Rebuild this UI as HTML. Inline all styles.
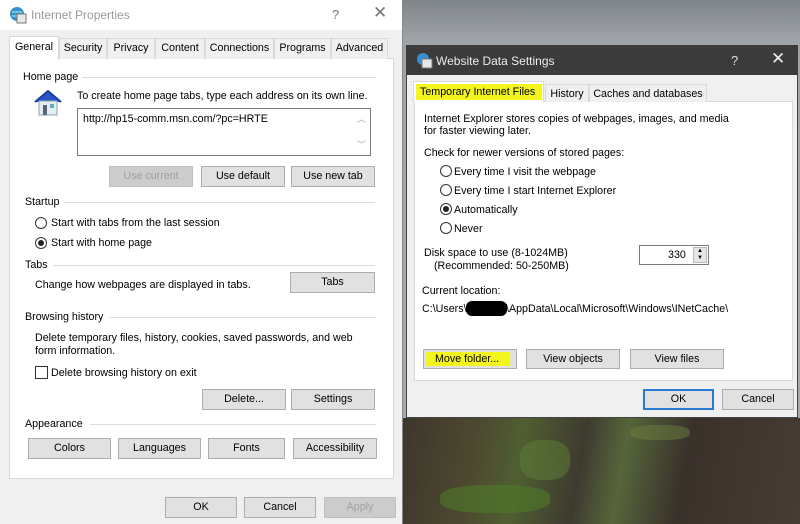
<!DOCTYPE html>
<html><head><style>
*{margin:0;padding:0;box-sizing:border-box}
body{width:800px;height:524px;overflow:hidden;position:relative;font-family:"Liberation Sans",sans-serif;font-size:10.7px;color:#000;background:#3a3430}
.a{position:absolute;white-space:nowrap}
.btn{position:absolute;background:#e1e1e1;border:1px solid #adadad;text-align:center;line-height:18px;font-size:10.7px}
.dis{color:#a0a0a0;background:#ccc;border-color:#bfbfbf}
.ln{position:absolute;height:1px;background:#dcdcdc}
.rad{position:absolute;width:12px;height:12px;border:1px solid #333;border-radius:50%;background:#fff}
.rad.on::after{content:"";position:absolute;left:2px;top:2px;width:6px;height:6px;border-radius:50%;background:#222}
.tab{position:absolute;border:1px solid #d9d9d9;border-bottom:none;background:#f0f0f0;text-align:center;line-height:19px}
</style></head><body>
<div class="a" style="left:400px;top:0;width:400px;height:420px;background:linear-gradient(#7f8488,#9ea3a7 40px,#a6aaad)"></div>
<div class="a" style="left:400px;top:418px;width:400px;height:106px;background:linear-gradient(100deg,#3e352c,#4d4a30 20%,#4f5f30 30%,#3f3a30 45%,#55663a 55%,#3a312b 70%,#463c33 100%)"></div>
<div class="a" style="left:440px;top:485px;width:110px;height:28px;background:#4f7a2a;border-radius:40%;opacity:.6"></div>
<div class="a" style="left:520px;top:440px;width:50px;height:40px;background:#5d8036;border-radius:40%;opacity:.5"></div>
<div class="a" style="left:630px;top:425px;width:60px;height:15px;background:#6c7d3e;border-radius:40%;opacity:.5"></div>

<div class="a" style="left:0;top:0;width:403px;height:524px;background:#f0f0f0;border-right:1px solid #888"></div>
<div class="a" style="left:0;top:0;width:402px;height:30px;background:#fff"></div>
<svg class="a" style="left:9px;top:6px" width="18" height="18"><circle cx="8" cy="8" r="7" fill="#3a8fcf"/><path d="M3 6h10M3 10h10" stroke="#9fd" stroke-width="1"/><rect x="8" y="8" width="9" height="9" fill="#e8e8e8" stroke="#777"/></svg>
<div class="a" style="left:31px;top:8px;font-size:12px;color:#999">Internet Properties</div>
<div class="a" style="left:332px;top:7px;font-size:13px;color:#777">?</div>
<div class="a" style="left:373px;top:3px;font-size:17px;color:#777">✕</div>

<div class="a" style="left:9px;top:58px;width:385px;height:421px;background:#fff;border:1px solid #d9d9d9"></div>
<div class="tab" style="left:59px;top:38px;width:48px;height:21px">Security</div>
<div class="tab" style="left:107px;top:38px;width:48px;height:21px">Privacy</div>
<div class="tab" style="left:155px;top:38px;width:50px;height:21px">Content</div>
<div class="tab" style="left:205px;top:38px;width:69px;height:21px">Connections</div>
<div class="tab" style="left:274px;top:38px;width:57px;height:21px">Programs</div>
<div class="tab" style="left:331px;top:38px;width:57px;height:21px">Advanced</div>
<div class="tab" style="left:9px;top:36px;width:50px;height:24px;background:#fff;line-height:20px">General</div>

<div class="a" style="left:23px;top:71px">Home page</div><div class="ln" style="left:82px;top:77px;width:294px"></div>
<svg class="a" style="left:32px;top:88px" width="32" height="30"><path d="M3 14L16 3 29 14" fill="#2a55c8" stroke="#1a3f9a" stroke-width="2"/><rect x="7" y="13" width="18" height="14" fill="#e4ecf4" stroke="#8aa"/><rect x="11" y="17" width="4" height="10" fill="#567"/><rect x="18" y="16" width="4" height="4" fill="#6ab"/></svg>
<div class="a" style="left:77px;top:90px">To create home page tabs, type each address on its own line.</div>
<div class="a" style="left:77px;top:108px;width:294px;height:48px;border:1px solid #7a7a7a;background:#fff"></div>
<div class="a" style="left:83px;top:113px">http://hp15-comm.msn.com/?pc=HRTE</div>
<div class="a" style="left:357px;top:112px;font-size:9px;color:#aaa">︿</div>
<div class="a" style="left:357px;top:138px;font-size:9px;color:#aaa">﹀</div>
<div class="btn dis" style="left:109px;top:166px;width:84px;height:21px">Use current</div>
<div class="btn" style="left:201px;top:166px;width:84px;height:21px">Use default</div>
<div class="btn" style="left:291px;top:166px;width:84px;height:21px">Use new tab</div>

<div class="a" style="left:25px;top:196px">Startup</div><div class="ln" style="left:64px;top:202px;width:311px"></div>
<div class="rad" style="left:35px;top:217px"></div><div class="a" style="left:51px;top:217px">Start with tabs from the last session</div>
<div class="rad on" style="left:35px;top:237px"></div><div class="a" style="left:51px;top:237px">Start with home page</div>
<div class="a" style="left:25px;top:259px">Tabs</div><div class="ln" style="left:53px;top:265px;width:322px"></div>
<div class="a" style="left:35px;top:279px">Change how webpages are displayed in tabs.</div>
<div class="btn" style="left:290px;top:272px;width:85px;height:21px">Tabs</div>
<div class="a" style="left:25px;top:311px">Browsing history</div><div class="ln" style="left:109px;top:317px;width:267px"></div>
<div class="a" style="left:35px;top:332px">Delete temporary files, history, cookies, saved passwords, and web</div>
<div class="a" style="left:35px;top:345px">form information.</div>
<div class="a" style="left:35px;top:366px;width:13px;height:13px;border:1px solid #333;background:#fff"></div>
<div class="a" style="left:51px;top:367px">Delete browsing history on exit</div>
<div class="btn" style="left:202px;top:389px;width:84px;height:21px">Delete...</div>
<div class="btn" style="left:291px;top:389px;width:84px;height:21px">Settings</div>
<div class="a" style="left:25px;top:418px">Appearance</div><div class="ln" style="left:90px;top:424px;width:286px"></div>
<div class="btn" style="left:28px;top:438px;width:83px;height:21px">Colors</div>
<div class="btn" style="left:118px;top:438px;width:83px;height:21px">Languages</div>
<div class="btn" style="left:208px;top:438px;width:77px;height:21px">Fonts</div>
<div class="btn" style="left:293px;top:438px;width:84px;height:21px">Accessibility</div>
<div class="btn" style="left:165px;top:497px;width:72px;height:21px">OK</div>
<div class="btn" style="left:244px;top:497px;width:72px;height:21px">Cancel</div>
<div class="btn dis" style="left:324px;top:497px;width:72px;height:21px">Apply</div>

<div class="a" style="left:406px;top:45px;width:392px;height:373px;background:#f0f0f0;border:1px solid #444"></div>
<div class="a" style="left:406px;top:45px;width:392px;height:30px;background:#3b3b3b"></div>
<svg class="a" style="left:416px;top:52px" width="18" height="18"><circle cx="7" cy="7" r="6" fill="#3a8fcf"/><rect x="6" y="7" width="10" height="9" fill="#e8e8e8" stroke="#777"/></svg>
<div class="a" style="left:436px;top:54px;font-size:12px;color:#eee">Website Data Settings</div>
<div class="a" style="left:731px;top:53px;font-size:13px;color:#ddd">?</div>
<div class="a" style="left:771px;top:49px;font-size:17px;color:#eee">✕</div>
<div class="a" style="left:414px;top:101px;width:379px;height:280px;background:#fff;border:1px solid #d9d9d9"></div>
<div class="tab" style="left:545px;top:84px;width:44px;height:18px;line-height:18px">History</div>
<div class="tab" style="left:589px;top:84px;width:118px;height:18px;line-height:18px">Caches and databases</div>
<div class="tab" style="left:413px;top:81px;width:131px;height:21px;background:#fff"></div>
<div class="a" style="left:416px;top:84px;width:126px;height:16px;background:#f4f51e"></div>
<div class="a" style="left:420px;top:86px">Temporary Internet Files</div>
<div class="a" style="left:424px;top:113px">Internet Explorer stores copies of webpages, images, and media</div>
<div class="a" style="left:424px;top:125px">for faster viewing later.</div>
<div class="a" style="left:424px;top:147px">Check for newer versions of stored pages:</div>
<div class="rad" style="left:440px;top:165px"></div><div class="a" style="left:454px;top:166px">Every time I visit the webpage</div>
<div class="rad" style="left:440px;top:184px"></div><div class="a" style="left:454px;top:185px">Every time I start Internet Explorer</div>
<div class="rad on" style="left:440px;top:203px"></div><div class="a" style="left:454px;top:204px">Automatically</div>
<div class="rad" style="left:440px;top:222px"></div><div class="a" style="left:454px;top:223px">Never</div>
<div class="a" style="left:424px;top:247px">Disk space to use (8-1024MB)</div>
<div class="a" style="left:434px;top:260px">(Recommended: 50-250MB)</div>
<div class="a" style="left:639px;top:245px;width:70px;height:20px;border:1px solid #7a7a7a;background:#fff"></div>
<div class="a" style="left:668px;top:249px">330</div>
<div class="a" style="left:693px;top:247px;width:14px;height:16px;background:#e6e6e6;border:1px solid #bbb;font-size:6px;line-height:7px;text-align:center">▲<br>▼</div>
<div class="a" style="left:422px;top:285px">Current location:</div>
<div class="a" style="left:422px;top:303px">C:\Users\</div>
<div class="a" style="left:466px;top:301px;width:41px;height:15px;background:#000;border-radius:6px"></div>
<div class="a" style="left:506px;top:303px">\AppData\Local\Microsoft\Windows\INetCache\</div>
<div class="btn" style="left:423px;top:349px;width:94px;height:20px"></div>
<div class="a" style="left:426px;top:352px;width:84px;height:14px;background:#f4f51e"></div>
<div class="a" style="left:435px;top:353px">Move folder...</div>
<div class="btn" style="left:526px;top:349px;width:94px;height:20px">View objects</div>
<div class="btn" style="left:630px;top:349px;width:94px;height:20px">View files</div>
<div class="btn" style="left:643px;top:389px;width:71px;height:21px;border:2px solid #2b7ad4;line-height:17px">OK</div>
<div class="btn" style="left:722px;top:389px;width:72px;height:21px">Cancel</div>
</body></html>
